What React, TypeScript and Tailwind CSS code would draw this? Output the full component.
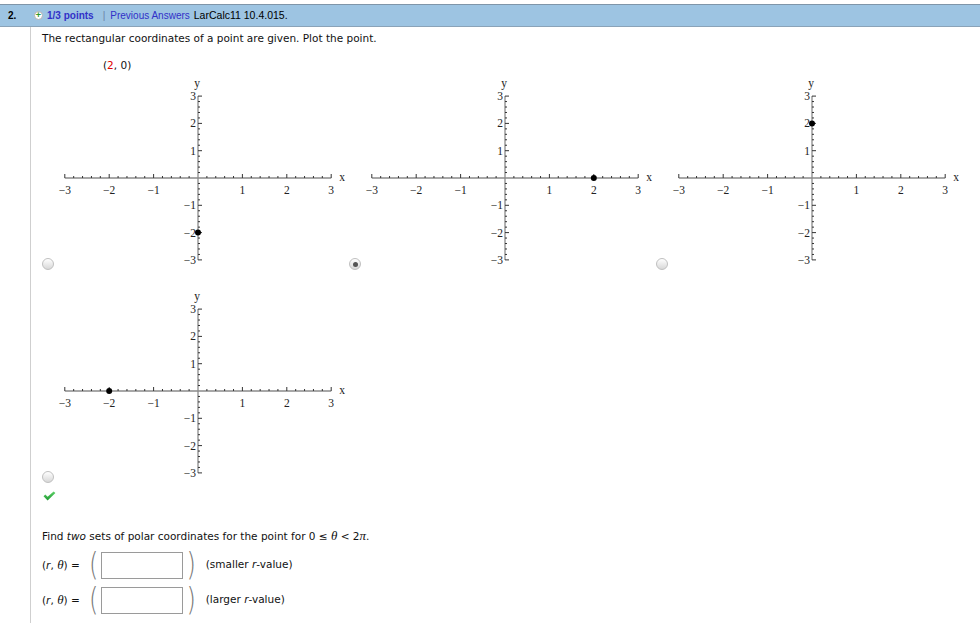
import React from "react";

const OX = 144;
const OY = 99;
const UX = 44.4;
const UY = 27.3;

function label(n: number) {
  return n < 0 ? `\u2212${-n}` : `${n}`;
}

function Graph({ px, py }: { px: number; py: number }) {
  const ticks = [];
  for (let i = -15; i <= 15; i++) {
    const major = i % 5 === 0;
    const h = major ? 4 : 2;
    const x = OX + i * 0.2 * UX;
    const y = OY - i * 0.2 * UY;
    if (i !== 0) {
      ticks.push(<line key={"x" + i} x1={x} y1={OY} x2={x} y2={OY - h} stroke="#333" strokeWidth="1" />);
      ticks.push(<line key={"y" + i} x1={OX} y1={y} x2={OX + h} y2={y} stroke="#333" strokeWidth="1" />);
    }
  }
  const nums = [-3, -2, -1, 1, 2, 3];
  return (
    <svg width="295" height="192" className="block shrink-0 overflow-visible" style={{ fontFamily: '"Liberation Serif", serif' }}>
      <line x1={OX - 3 * UX} y1={OY} x2={OX + 3 * UX} y2={OY} stroke="#8a8a8a" strokeWidth="1.3" />
      <line x1={OX} y1={OY - 3 * UY} x2={OX} y2={OY + 3 * UY} stroke="#8a8a8a" strokeWidth="1.3" />
      {ticks}
      {nums.map((n) => (
        <text key={"lx" + n} x={OX + n * UX} y={OY + 16} fontSize="11.5" textAnchor="middle" fill="#222">
          {label(n)}
        </text>
      ))}
      {nums.map((n) => (
        <text key={"ly" + n} x={OX - 2} y={OY - n * UY + 4} fontSize="11.5" textAnchor="end" fill="#222">
          {label(n)}
        </text>
      ))}
      <text x={OX - 1} y={8} fontSize="11.5" textAnchor="middle" fill="#222">y</text>
      <text x={OX + 3 * UX + 11} y={OY + 3} fontSize="11.5" textAnchor="middle" fill="#222">x</text>
      <circle cx={OX + px * UX} cy={OY - py * UY} r="3" fill="#000" />
    </svg>
  );
}

function Radio({ checked }: { checked?: boolean }) {
  return (
    <span className="mb-[1px] flex h-[12px] w-[12px] shrink-0 items-center justify-center rounded-full border border-[#c0c0c0] bg-linear-to-b from-white to-[#d8d8d8]">
      {checked && <span className="h-[5px] w-[5px] rounded-full bg-[#555]" />}
    </span>
  );
}

function Cell({ px, py, checked }: { px: number; py: number; checked?: boolean }) {
  return (
    <div className="flex w-[307px] items-end">
      <Radio checked={checked} />
      <Graph px={px} py={py} />
    </div>
  );
}

const serifItalic = "font-['Liberation_Serif',serif] italic text-[13px]";

function Paren({ right }: { right?: boolean }) {
  return (
    <span className="inline-block scale-y-[1.3] font-['DejaVu_Sans',sans-serif] text-[24px] font-extralight leading-none text-[#777]">
      {right ? ")" : "("}
    </span>
  );
}

function AnswerRow({ hint }: { hint: string }) {
  return (
    <div className="flex h-[34px] items-center">
      <span className="w-[47px]">
        (<i>r</i>, <span className={serifItalic}>θ</span>) =
      </span>
      <Paren />
      <span className="ml-[3px] h-[27px] w-[82px] border border-[#9a9a9a] bg-white" />
      <span className="ml-[3px]">
        <Paren right />
      </span>
      <span className="ml-[10px]">
        ({hint} <i>r</i>-value)
      </span>
    </div>
  );
}

export default function App() {
  return (
    <div className="h-[623px] w-[980px] overflow-hidden bg-white pt-[4px] font-['DejaVu_Sans',sans-serif] text-[10.5px] text-[#111]">
      <div className="flex h-[23px] items-center border-t border-b border-t-[#7f95a8] border-b-[#8aa3b8] bg-[#9dc4e2] font-['Liberation_Sans',sans-serif] text-[10px]">
        <span className="w-[34px] pl-[8px] font-bold text-black">2.</span>
        <span className="flex h-[9px] w-[9px] items-center justify-center rounded-full border border-[#b0b0b0] bg-white text-[9px] font-bold leading-none text-[#2b9a2b]">
          +
        </span>
        <span className="ml-[4px] font-bold text-[#3131c8]">1/3 points</span>
        <span className="ml-[9px] text-[#6a7fa8]">|</span>
        <span className="ml-[5px] text-[#3131c8]">Previous Answers</span>
        <span className="ml-[4px] text-[10.5px] text-black">LarCalc11 10.4.015.</span>
      </div>
      <div className="flex h-[596px]">
        <div className="w-[31px] shrink-0 border-r border-[#cfcfcf]" />
        <div className="flex-1 pl-[11px]">
          <p className="mt-[4px] leading-[14px]">The rectangular coordinates of a point are given. Plot the point.</p>
          <p className="mt-[13px] ml-[61px] leading-[14px]">
            (<span className="text-[#e00000]">2</span>, 0)
          </p>
          <div className="mt-[7px] flex">
            <Cell px={0} py={-2} />
            <Cell px={2} py={0} checked />
            <Cell px={0} py={2} />
          </div>
          <div className="mt-[21px] flex">
            <Cell px={-2} py={0} />
          </div>
          <svg width="13" height="10" className="mt-[7px] ml-[1px] block">
            <defs>
              <linearGradient id="ck" x1="0" y1="0" x2="0" y2="1">
                <stop offset="0" stopColor="#5fd36a" />
                <stop offset="1" stopColor="#1f9a32" />
              </linearGradient>
            </defs>
            <path d="M0.5 5.2 L2.3 3.6 L4.6 5.8 L10.6 0.4 L12.4 2 L4.6 9.4 Z" fill="url(#ck)" />
          </svg>
          <p className="mt-[28px] leading-[14px]">
            Find <i>two</i> sets of polar coordinates for the point for 0 ≤ <span className={serifItalic}>θ</span> &lt; 2
            <span className={serifItalic}>π</span>.
          </p>
          <div className="mt-[5px]">
            <AnswerRow hint="smaller" />
            <div className="mt-[1px]">
              <AnswerRow hint="larger" />
            </div>
          </div>
        </div>
      </div>
    </div>
  );
}
